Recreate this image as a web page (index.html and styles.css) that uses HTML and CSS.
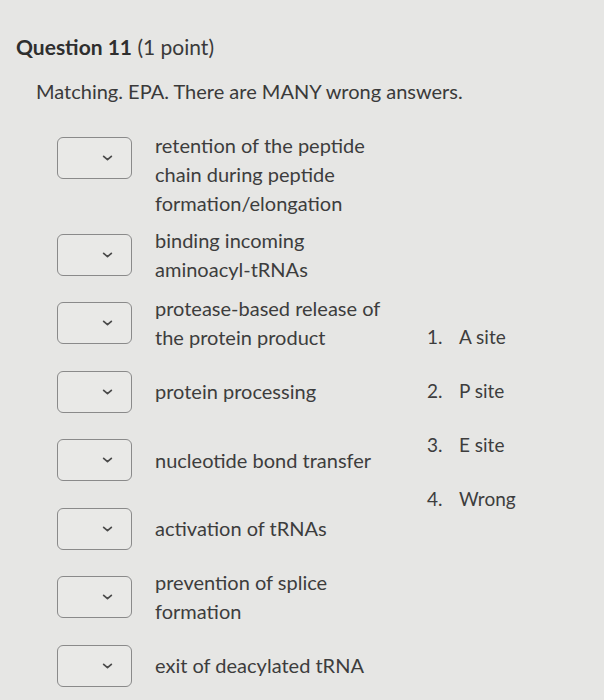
FILE: index.html
```html
<!DOCTYPE html>
<html lang="en">
<head>
<meta charset="utf-8">
<title>Question 11</title>
<link rel="stylesheet" href="styles.css">
</head>
<body>
<main class="question">
  <h2 class="q-title"><strong>Question 11</strong> <span class="q-points">(1 point)</span></h2>
  <p class="q-prompt">Matching. EPA. There are MANY wrong answers.</p>
  <div class="match">
    <div class="pairs">
      <div class="pair pair-first">
        <div class="select"><svg class="chev" viewBox="0 0 12 7" width="11" height="6"><path d="M1.5 1.5 L6 5.5 L10.5 1.5" fill="none" stroke="#4a4a4a" stroke-width="2" stroke-linecap="round" stroke-linejoin="round"/></svg></div>
        <div class="term">retention of the peptide chain during peptide formation/elongation</div>
      </div>
      <div class="pair">
        <div class="select"><svg class="chev" viewBox="0 0 12 7" width="11" height="6"><path d="M1.5 1.5 L6 5.5 L10.5 1.5" fill="none" stroke="#4a4a4a" stroke-width="2" stroke-linecap="round" stroke-linejoin="round"/></svg></div>
        <div class="term">binding incoming aminoacyl-tRNAs</div>
      </div>
      <div class="pair">
        <div class="select"><svg class="chev" viewBox="0 0 12 7" width="11" height="6"><path d="M1.5 1.5 L6 5.5 L10.5 1.5" fill="none" stroke="#4a4a4a" stroke-width="2" stroke-linecap="round" stroke-linejoin="round"/></svg></div>
        <div class="term">protease-based release of the protein product</div>
      </div>
      <div class="pair">
        <div class="select"><svg class="chev" viewBox="0 0 12 7" width="11" height="6"><path d="M1.5 1.5 L6 5.5 L10.5 1.5" fill="none" stroke="#4a4a4a" stroke-width="2" stroke-linecap="round" stroke-linejoin="round"/></svg></div>
        <div class="term">protein processing</div>
      </div>
      <div class="pair">
        <div class="select"><svg class="chev" viewBox="0 0 12 7" width="11" height="6"><path d="M1.5 1.5 L6 5.5 L10.5 1.5" fill="none" stroke="#4a4a4a" stroke-width="2" stroke-linecap="round" stroke-linejoin="round"/></svg></div>
        <div class="term">nucleotide bond transfer</div>
      </div>
      <div class="pair">
        <div class="select"><svg class="chev" viewBox="0 0 12 7" width="11" height="6"><path d="M1.5 1.5 L6 5.5 L10.5 1.5" fill="none" stroke="#4a4a4a" stroke-width="2" stroke-linecap="round" stroke-linejoin="round"/></svg></div>
        <div class="term">activation of tRNAs</div>
      </div>
      <div class="pair">
        <div class="select"><svg class="chev" viewBox="0 0 12 7" width="11" height="6"><path d="M1.5 1.5 L6 5.5 L10.5 1.5" fill="none" stroke="#4a4a4a" stroke-width="2" stroke-linecap="round" stroke-linejoin="round"/></svg></div>
        <div class="term">prevention of splice formation</div>
      </div>
      <div class="pair">
        <div class="select"><svg class="chev" viewBox="0 0 12 7" width="11" height="6"><path d="M1.5 1.5 L6 5.5 L10.5 1.5" fill="none" stroke="#4a4a4a" stroke-width="2" stroke-linecap="round" stroke-linejoin="round"/></svg></div>
        <div class="term">exit of deacylated tRNA</div>
      </div>
    </div>
    <ol class="answers">
      <li><span class="num">1.</span><span>A site</span></li>
      <li><span class="num">2.</span><span>P site</span></li>
      <li><span class="num">3.</span><span>E site</span></li>
      <li><span class="num">4.</span><span>Wrong</span></li>
    </ol>
  </div>
</main>
</body>
</html>
```
FILE: styles.css
```css
html, body {
  margin: 0;
  padding: 0;
  height: 100%;
  overflow: hidden;
}

body {
  background: #e6e6e4;
  font-family: Lato, "Open Sans", "Liberation Sans", sans-serif;
  color: #3d3d3d;
}

.question {
  padding: 34px 0 0 16px;
}

.q-title {
  margin: 0;
  font-size: 21px;
  line-height: 26px;
  font-weight: 400;
  color: #2e2e2e;
}

.q-title strong {
  font-weight: 700;
}

.q-points {
  color: #3a3a3a;
}

.q-prompt {
  margin: 17px 0 0 20px;
  font-size: 20px;
  line-height: 29px;
  color: #3a3a3a;
}

.match {
  margin: 21.5px 0 0 41px;
  display: grid;
  grid-template-columns: 370px 1fr;
}

.pairs {
  display: flex;
  flex-direction: column;
}

.pair {
  display: flex;
  align-items: center;
  gap: 23px;
  min-height: 68.5px;
  padding: 3px 0;
  box-sizing: border-box;
}

.pair-first .select {
  align-self: flex-start;
  margin-top: 6.5px;
}

.select {
  flex: none;
  width: 75px;
  height: 42px;
  box-sizing: border-box;
  border: 1.5px solid #8a8a8a;
  border-radius: 6px;
  background: #e9e9e7;
  display: flex;
  align-items: center;
  justify-content: flex-end;
  padding-right: 18px;
}

.chev {
  display: block;
}

.term {
  width: 236px;
  font-size: 20px;
  line-height: 29px;
  color: #3d3d3d;
}

.answers {
  list-style: none;
  margin: 0;
  padding: 181.5px 0 0 0;
}

.answers li {
  display: flex;
  align-items: center;
  height: 54px;
  font-size: 19px;
  color: #3d3d3d;
}

.answers .num {
  width: 32px;
}
```
